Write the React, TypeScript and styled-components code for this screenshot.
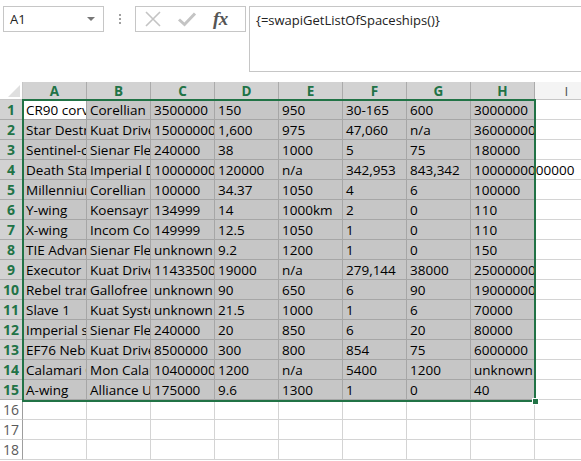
import styled, { createGlobalStyle } from "styled-components";

const GlobalStyle = createGlobalStyle`
  html, body {
    margin: 0;
    padding: 0;
    background: #ffffff;
    overflow: hidden;
  }
  body {
    font-family: "Open Sans", "Liberation Sans", sans-serif;
  }
`;

const COLS = ["A", "B", "C", "D", "E", "F", "G", "H", "I"];
const SELECTED_COLS = 8;
const SELECTED_ROWS = 15;
const TOTAL_ROWS = 18;

const DATA: string[][] = [
  ["CR90 corvette", "Corellian Engineering Corporation", "3500000", "150", "950", "30-165", "600", "3000000"],
  ["Star Destroyer", "Kuat Drive Yards", "150000000", "1,600", "975", "47,060", "n/a", "36000000"],
  ["Sentinel-class landing craft", "Sienar Fleet Systems", "240000", "38", "1000", "5", "75", "180000"],
  ["Death Star", "Imperial Department of Military Research", "1000000000000", "120000", "n/a", "342,953", "843,342", "1000000000000"],
  ["Millennium Falcon", "Corellian Engineering Corporation", "100000", "34.37", "1050", "4", "6", "100000"],
  ["Y-wing", "Koensayr Manufacturing", "134999", "14", "1000km", "2", "0", "110"],
  ["X-wing", "Incom Corporation", "149999", "12.5", "1050", "1", "0", "110"],
  ["TIE Advanced x1", "Sienar Fleet Systems", "unknown", "9.2", "1200", "1", "0", "150"],
  ["Executor", "Kuat Drive Yards, Fondor Shipyards", "1143350000", "19000", "n/a", "279,144", "38000", "250000000"],
  ["Rebel transport", "Gallofree Yards, Inc.", "unknown", "90", "650", "6", "90", "19000000"],
  ["Slave 1", "Kuat Systems Engineering", "unknown", "21.5", "1000", "1", "6", "70000"],
  ["Imperial shuttle", "Sienar Fleet Systems", "240000", "20", "850", "6", "20", "80000"],
  ["EF76 Nebulon-B escort frigate", "Kuat Drive Yards", "8500000", "300", "800", "854", "75", "6000000"],
  ["Calamari Cruiser", "Mon Calamari shipyards", "104000000", "1200", "n/a", "5400", "1200", "unknown"],
  ["A-wing", "Alliance Underground Engineering", "175000", "9.6", "1300", "1", "0", "40"],
];

const GREEN = "#217346";

const Page = styled.div`
  width: 581px;
  height: 461px;
  overflow: hidden;
  display: flex;
  flex-direction: column;
`;

const TopBar = styled.div`
  display: flex;
  align-items: flex-start;
  height: 82px;
  padding: 6px 0 0 3px;
  box-sizing: border-box;
`;

const NameBox = styled.div`
  box-sizing: border-box;
  width: 101px;
  height: 26px;
  border: 1px solid #c6c6c6;
  display: flex;
  align-items: center;
  padding: 0 8px 0 6px;
  font-size: 13px;
  color: #222;
`;

const NameText = styled.span`
  flex: 1;
`;

const DropArrow = styled.span`
  width: 0;
  height: 0;
  border-left: 4px solid transparent;
  border-right: 4px solid transparent;
  border-top: 4px solid #777;
`;

const Dots = styled.div`
  width: 31px;
  height: 26px;
  display: flex;
  flex-direction: column;
  align-items: center;
  justify-content: center;
  gap: 2px;
`;

const Dot = styled.span`
  width: 2px;
  height: 2px;
  background: #a0a0a0;
`;

const FxBox = styled.div`
  box-sizing: border-box;
  width: 111px;
  height: 26px;
  border: 1px solid #c6c6c6;
  display: flex;
  align-items: center;
  padding: 0 0 0 8px;
  gap: 15px;
`;

const Fx = styled.span`
  font-family: "Liberation Serif", "DejaVu Serif", serif;
  font-style: italic;
  font-weight: bold;
  font-size: 19px;
  color: #555;
  letter-spacing: -0.5px;
  margin-left: 1px;
  line-height: 24px;
`;

const FormulaBox = styled.div`
  box-sizing: border-box;
  margin-left: 3px;
  flex: 1;
  height: 66px;
  border: 1px solid #c6c6c6;
  border-right: none;
  padding: 4px 6px;
  font-size: 13px;
  color: #222;
`;

const GridWrap = styled.div`
  position: relative;
  overflow: hidden;
  flex: 1;
`;

const Grid = styled.div`
  display: grid;
  grid-template-columns: 23px repeat(9, 64px);
  grid-template-rows: 18px;
  grid-auto-rows: 20px;
  width: 599px;
`;

const Corner = styled.div`
  position: relative;
  box-sizing: border-box;
  background: #ffffff;
  border-right: 1px solid #c6c6c6;
  border-bottom: 1px solid #c6c6c6;

  &::after {
    content: "";
    position: absolute;
    right: 2px;
    bottom: 2px;
    width: 0;
    height: 0;
    border-left: 12px solid transparent;
    border-bottom: 12px solid #dfdfdf;
  }
`;

const ColHead = styled.div<{ $sel: boolean }>`
  box-sizing: border-box;
  display: flex;
  align-items: center;
  justify-content: center;
  font-size: 13.5px;
  font-weight: ${({ $sel }) => ($sel ? 700 : 400)};
  color: ${({ $sel }) => ($sel ? GREEN : "#555")};
  background: ${({ $sel }) => ($sel ? "#d2d2d2" : "#f4f4f4")};
  border-right: 1px solid ${({ $sel }) => ($sel ? "#ababab" : "#d4d4d4")};
  border-bottom: 1px solid #c6c6c6;
`;

const RowHead = styled.div<{ $sel: boolean }>`
  box-sizing: border-box;
  display: flex;
  align-items: center;
  justify-content: center;
  font-size: 14px;
  font-weight: ${({ $sel }) => ($sel ? 700 : 400)};
  color: ${({ $sel }) => ($sel ? GREEN : "#5a5a5a")};
  background: ${({ $sel }) => ($sel ? "#d2d2d2" : "#ffffff")};
  border-right: 1px solid #9e9e9e;
  border-bottom: 1px solid ${({ $sel }) => ($sel ? "#ababab" : "#d4d4d4")};
`;

const Cell = styled.div<{ $sel: boolean; $active: boolean; $spill: boolean }>`
  box-sizing: border-box;
  padding: 0 2px 0 3px;
  font-size: 13.5px;
  line-height: 20px;
  color: #000;
  white-space: nowrap;
  overflow: ${({ $spill }) => ($spill ? "visible" : "hidden")};
  position: ${({ $spill }) => ($spill ? "relative" : "static")};
  z-index: ${({ $spill }) => ($spill ? 1 : "auto")};
  background: ${({ $sel, $active }) =>
    $active ? "#ffffff" : $sel ? "#c6c6c6" : "transparent"};
  border-right: 1px solid ${({ $sel }) => ($sel ? "#a6a6a6" : "#d4d4d4")};
  border-bottom: 1px solid ${({ $sel }) => ($sel ? "#a6a6a6" : "#d4d4d4")};
`;

const Selection = styled.div`
  position: absolute;
  left: 22px;
  top: 17px;
  width: 514px;
  height: 303px;
  box-sizing: border-box;
  border: 2px solid ${GREEN};
  pointer-events: none;
  z-index: 2;
`;

const Handle = styled.div`
  position: absolute;
  right: -5px;
  bottom: -5px;
  width: 5px;
  height: 5px;
  background: ${GREEN};
  border: 1px solid #ffffff;
`;

function CancelIcon() {
  return (
    <svg width="18" height="16" viewBox="0 0 18 16">
      <path d="M2 1 L16 15 M16 1 L2 15" stroke="#c4c4c4" strokeWidth="1.6" fill="none" />
    </svg>
  );
}

function CheckIcon() {
  return (
    <svg width="20" height="16" viewBox="0 0 20 16">
      <path d="M2 8.5 L7.5 13.5 L18 2.5" stroke="#c4c4c4" strokeWidth="3" fill="none" />
    </svg>
  );
}

export default function App() {
  const rows = Array.from({ length: TOTAL_ROWS }, (_, i) => i);
  return (
    <Page>
      <GlobalStyle />
      <TopBar>
        <NameBox>
          <NameText>A1</NameText>
          <DropArrow />
        </NameBox>
        <Dots>
          <Dot />
          <Dot />
          <Dot />
        </Dots>
        <FxBox>
          <CancelIcon />
          <CheckIcon />
          <Fx>fx</Fx>
        </FxBox>
        <FormulaBox>{"{=swapiGetListOfSpaceships()}"}</FormulaBox>
      </TopBar>
      <GridWrap>
        <Grid>
          <Corner />
          {COLS.map((c, ci) => (
            <ColHead key={c} $sel={ci < SELECTED_COLS}>
              {c}
            </ColHead>
          ))}
          {rows.map((r) => {
            const rowSel = r < SELECTED_ROWS;
            return [
              <RowHead key={`h${r}`} $sel={rowSel}>
                {r + 1}
              </RowHead>,
              ...COLS.map((c, ci) => {
                const sel = rowSel && ci < SELECTED_COLS;
                const value = rowSel ? DATA[r][ci] ?? "" : "";
                return (
                  <Cell
                    key={`${c}${r}`}
                    $sel={sel}
                    $active={r === 0 && ci === 0}
                    $spill={r === 3 && ci === 7}
                  >
                    {value}
                  </Cell>
                );
              }),
            ];
          })}
        </Grid>
        <Selection>
          <Handle />
        </Selection>
      </GridWrap>
    </Page>
  );
}
